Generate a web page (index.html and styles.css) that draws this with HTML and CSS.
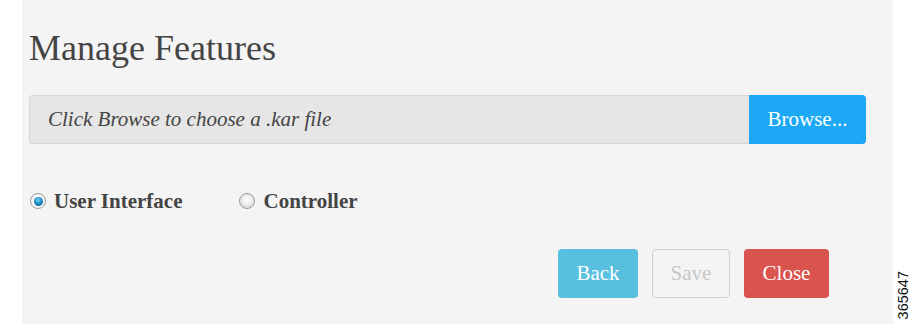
FILE: index.html
```html
<!DOCTYPE html>
<html>
<head>
<meta charset="utf-8">
<link rel="stylesheet" href="styles.css">
</head>
<body>
<div class="page">
  <div class="panel">
    <h1 class="title">Manage Features</h1>
    <div class="file-row">
      <div class="file-input">Click Browse to choose a .kar file</div>
      <div class="browse">Browse...</div>
    </div>
    <div class="radio-row">
      <label class="radio-item"><span class="radio checked"></span><span class="radio-label">User Interface</span></label>
      <label class="radio-item"><span class="radio"></span><span class="radio-label">Controller</span></label>
    </div>
    <div class="actions">
      <div class="btn btn-back">Back</div>
      <div class="btn btn-save">Save</div>
      <div class="btn btn-close">Close</div>
    </div>
  </div>
  <div class="side">
    <span class="fig">365647</span>
  </div>
</div>
</body>
</html>
```

FILE: styles.css
```css
html, body {
  margin: 0;
  padding: 0;
  background: #ffffff;
}
.page {
  display: flex;
  width: 912px;
  height: 324px;
  overflow: hidden;
}
.panel {
  margin-left: 22px;
  width: 871px;
  height: 324px;
  background: #f4f4f4;
  padding-left: 7px;
  box-sizing: border-box;
  font-family: "Liberation Serif", "Times New Roman", serif;
  display: flex;
  flex-direction: column;
}
.title {
  margin: 0;
  padding-top: 27px;
  font-family: "Liberation Serif", "Times New Roman", serif;
  font-size: 36px;
  line-height: 42px;
  font-weight: normal;
  color: #444444;
}
.file-row {
  display: flex;
  margin-top: 26px;
  height: 49px;
  width: 837px;
}
.file-input {
  flex: 1;
  box-sizing: border-box;
  background: #e6e6e6;
  border: 1px solid #d6d6d6;
  border-right: none;
  border-radius: 4px 0 0 4px;
  padding-left: 18px;
  font-family: "Liberation Serif", "Times New Roman", serif;
  font-style: italic;
  font-size: 21px;
  line-height: 47px;
  color: #444444;
}
.browse {
  width: 117px;
  box-sizing: border-box;
  background: #1ca8f4;
  border-radius: 0 4px 4px 0;
  color: #ffffff;
  font-size: 21px;
  line-height: 49px;
  text-align: center;
}
.radio-row {
  display: flex;
  margin-top: 45px;
  height: 24px;
  align-items: center;
}
.radio-item {
  display: flex;
  align-items: center;
}
.radio-item + .radio-item {
  margin-left: 56px;
}
.radio {
  width: 16px;
  height: 16px;
  box-sizing: border-box;
  border-radius: 50%;
  border: 1px solid #9a9a9a;
  background: radial-gradient(circle at 50% 40%, #ffffff 0%, #e4e4e4 60%, #cfcfcf 100%);
  margin-left: 1px;
  margin-right: 8px;
  position: relative;
}
.radio.checked {
  background: #f6f6f6;
}
.radio.checked::after {
  content: "";
  position: absolute;
  left: 2.5px;
  top: 2.5px;
  width: 9px;
  height: 9px;
  border-radius: 50%;
  background: radial-gradient(circle at 45% 35%, #7fd0f5 0%, #1d8fc9 45%, #0b4f7a 100%);
}
.radio-label {
  font-weight: bold;
  font-size: 21px;
  color: #444444;
}
.actions {
  display: flex;
  justify-content: flex-end;
  gap: 14px;
  margin-top: 36px;
  margin-right: 64px;
}
.btn {
  height: 49px;
  box-sizing: border-box;
  border-radius: 4px;
  font-size: 21px;
  line-height: 49px;
  text-align: center;
}
.btn-back {
  width: 80px;
  background: #58bfdf;
  color: #ffffff;
}
.btn-save {
  width: 78px;
  border: 1px solid #cfcfcf;
  color: #c8c8c8;
  line-height: 47px;
  background: #f4f4f4;
}
.btn-close {
  width: 85px;
  background: #d9534f;
  color: #ffffff;
}
.side {
  flex: 1;
  display: flex;
  align-items: flex-end;
  justify-content: center;
  padding-bottom: 5px;
}
.fig {
  writing-mode: vertical-rl;
  transform: rotate(180deg);
  font-family: "Liberation Sans", Arial, sans-serif;
  font-size: 14.5px;
  color: #111111;
}
```
